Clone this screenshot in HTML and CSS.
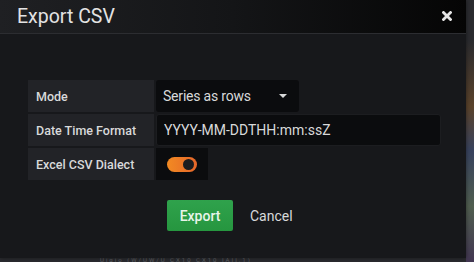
FILE: index.html
```html
<!DOCTYPE html>
<html lang="en">
<head>
<meta charset="UTF-8">
<meta name="viewport" content="width=device-width, initial-scale=1.0">
<title>Export CSV</title>
<link rel="stylesheet" href="styles.css">
</head>
<body>
<!-- dashboard behind the modal, mostly hidden -->
<div class="backdrop">
    <div class="backdrop-art"></div>
    <div class="backdrop-text">Uiqio (W/UW/U CX10 CX10 IAII.1)</div>
</div>

<div class="modal">
    <div class="modal-header">
        <h2 class="modal-title">Export CSV</h2>
        <button class="modal-close" aria-label="Close">
            <svg width="10" height="10" viewBox="0 0 10 10">
                <path d="M1.5 1.5 L8.5 8.5 M8.5 1.5 L1.5 8.5" stroke="#e6e6e6" stroke-width="2.8" stroke-linecap="square"/>
            </svg>
        </button>
    </div>

    <div class="modal-body">
        <div class="form-row">
            <label class="form-label">Mode</label>
            <div class="form-select">
                <span>Series as rows</span>
                <span class="caret"></span>
            </div>
        </div>
        <div class="form-row">
            <label class="form-label">Date Time Format</label>
            <input class="form-input" type="text" value="YYYY-MM-DDTHH:mm:ssZ">
        </div>
        <div class="form-row">
            <label class="form-label">Excel CSV Dialect</label>
            <div class="form-switch">
                <span class="switch-track"><span class="switch-knob"></span></span>
            </div>
        </div>

        <div class="button-row">
            <button class="btn-export">Export</button>
            <button class="btn-cancel">Cancel</button>
        </div>
    </div>
</div>
</body>
</html>
```

FILE: styles.css
```css
body {
    margin: 0;
    padding: 0;
    width: 474px;
    height: 262px;
    overflow: hidden;
    background-color: #2a2b2f;
    font-family: Roboto, "Liberation Sans", sans-serif;
    position: relative;
}

.backdrop {
    width: 100%;
    height: 100%;
}

.backdrop-art {
    position: absolute;
    top: 40px;
    right: 0;
    width: 8px;
    height: 222px;
    background: linear-gradient(180deg, #2a2b2f 0%, #6a4a2a 30%, #3c4a6e 50%, #5d6f5a 75%, #4a3a5e 100%);
    opacity: 0.75;
}

.backdrop-text {
    position: absolute;
    top: 257px;
    left: 100px;
    color: #5e5f63;
    font-size: 6px;
    line-height: 5px;
    letter-spacing: 2px;
}

/* modal */
.modal {
    position: absolute;
    top: 0;
    left: 0;
    width: 466px;
    height: 258px;
    background-color: #17181b;
    box-shadow: 0 0 4px rgba(0, 0, 0, 0.5);
}

.modal-header {
    height: 33px;
    display: flex;
    align-items: center;
    justify-content: space-between;
    background: linear-gradient(90deg, #1f2023 0%, #141517 50%, #050505 100%);
    border-bottom: 1px solid #2c2d31;
}

.modal-title {
    margin: 0 0 0 17px;
    font-size: 19.5px;
    font-weight: 400;
    color: #e3e3e3;
    line-height: 1;
}

.modal-close {
    background: none;
    border: none;
    padding: 0;
    margin-right: 14px;
    margin-top: -2px;
    display: flex;
    cursor: pointer;
}

.modal-body {
    padding: 46px 0 0 28px;
}

.form-row {
    display: flex;
    gap: 2px;
    height: 32px;
    margin-bottom: 2px;
}

.form-label {
    width: 126px;
    box-sizing: border-box;
    padding-left: 8px;
    display: flex;
    align-items: center;
    background-color: #222327;
    color: #d8d9da;
    font-size: 12.5px;
    font-weight: 500;
}

.form-select {
    width: 143px;
    box-sizing: border-box;
    padding: 0 12px 0 7px;
    display: flex;
    align-items: center;
    justify-content: space-between;
    background-color: #0b0c0e;
    border-radius: 3px;
    color: #d8d9da;
    font-size: 14px;
    letter-spacing: -0.2px;
}

.caret {
    width: 0;
    height: 0;
    border-left: 4px solid transparent;
    border-right: 4px solid transparent;
    border-top: 4px solid #d8d9da;
}

.form-input {
    width: 285px;
    box-sizing: border-box;
    padding: 0 7px;
    background-color: #0b0c0e;
    border: 1px solid #1c1d20;
    border-radius: 3px;
    color: #d8d9da;
    font-family: inherit;
    font-size: 14px;
    outline: none;
}

.form-switch {
    width: 52px;
    box-sizing: border-box;
    display: flex;
    align-items: center;
    justify-content: center;
    background-color: #0b0c0e;
}

.switch-track {
    width: 30px;
    height: 15px;
    border-radius: 8px;
    background: linear-gradient(90deg, #f28a22 0%, #e5662a 100%);
    position: relative;
}

.switch-knob {
    position: absolute;
    top: 2px;
    right: 3px;
    width: 11px;
    height: 11px;
    border-radius: 50%;
    background-color: #1b1c1f;
}

.button-row {
    display: flex;
    align-items: center;
    margin-top: 20px;
    padding-left: 139px;
}

.btn-export {
    width: 66px;
    height: 31px;
    background: linear-gradient(180deg, #2fa24c 0%, #26963f 100%);
    border: none;
    border-radius: 2px;
    color: #e8f5ea;
    font-family: inherit;
    font-size: 14px;
    font-weight: 500;
    cursor: pointer;
}

.btn-cancel {
    margin-left: 17px;
    padding: 0;
    background: none;
    border: none;
    color: #d8d9da;
    font-family: inherit;
    font-size: 14px;
    cursor: pointer;
}
```
